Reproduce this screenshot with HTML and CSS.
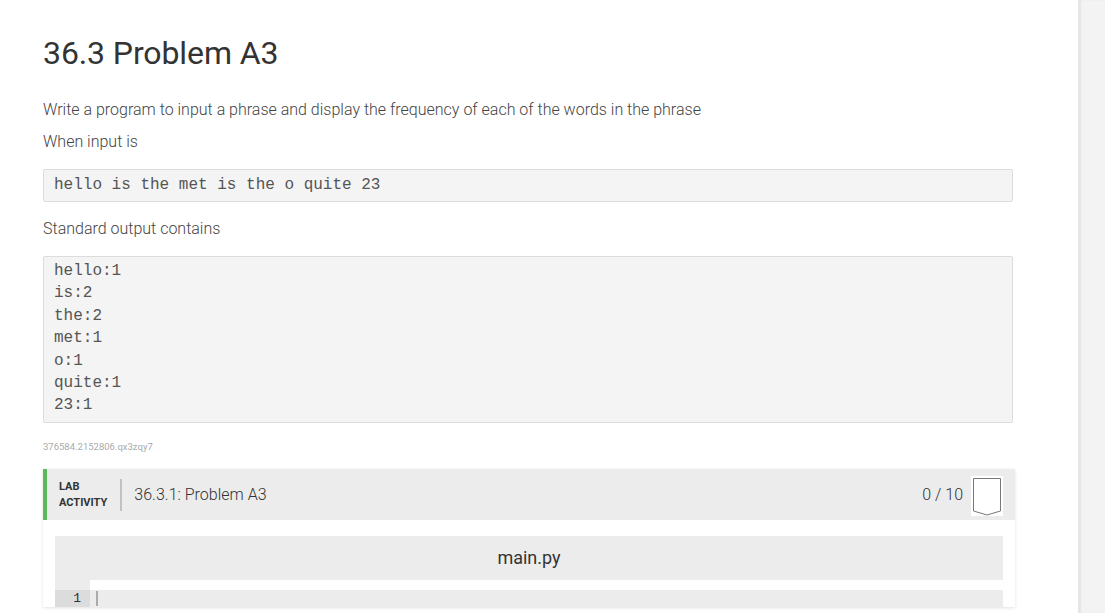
FILE: index.html
```html
<!DOCTYPE html>
<html>
<head>
<meta charset="utf-8">
<link rel="stylesheet" href="styles.css">
</head>
<body>
<div class="page">
  <main class="content">
    <h1 class="title">36.3 Problem A3</h1>
    <p class="text first">Write a program to input a phrase and display the frequency of each of the words in the phrase</p>
    <p class="text">When input is</p>
    <pre class="code single">hello is the met is the o quite 23</pre>
    <p class="text">Standard output contains</p>
    <pre class="code multi">hello:1
is:2
the:2
met:1
o:1
quite:1
23:1</pre>
    <div class="ident">376584.2152806.qx3zqy7</div>
    <section class="lab">
      <header class="lab-head">
        <div class="lab-label">LAB<br>ACTIVITY</div>
        <div class="lab-sep"></div>
        <div class="lab-title">36.3.1: Problem A3</div>
        <div class="lab-score">0 / 10</div>
        <div class="badge">
          <svg width="32" height="40" viewBox="0 0 32 40"><path d="M2.5 2.5 H29.5 V35 L16 39 L2.5 35 Z" fill="#fff" stroke="#777" stroke-width="1"/></svg>
        </div>
      </header>
      <div class="lab-body">
        <div class="editor">
          <div class="file-bar">main.py</div>
          <div class="gap-row"><div class="gutter-top"></div></div>
          <div class="line-row">
            <div class="gutter">1</div>
            <div class="cursor"></div>
          </div>
        </div>
      </div>
    </section>
  </main>
  <aside class="side"></aside>
</div>
</body>
</html>
```
FILE: styles.css
```css
* { box-sizing: border-box; }
html, body { margin: 0; padding: 0; height: 100%; overflow: hidden; background: #fff; }
body { font-family: Roboto, "Noto Sans", sans-serif; color: #333; }
.page { display: flex; height: 613px; }
.content { width: 1078px; padding: 0 65px 0 43px; flex: none; }
.side { flex: 1; background: #f3f3f3; box-shadow: inset 2px 0 2px rgba(0,0,0,0.06); border-left: 1px solid #e6e6e6; }
.title { font-weight: 400; font-size: 32px; color: #333; margin: 0; padding-top: 34px; line-height: 38px; letter-spacing: -0.1px; }
.text { font-size: 16px; font-weight: 300; color: #444; margin: 0; line-height: 22px; }
.text.first { margin-top: 27px; }
.text + .text { margin-top: 10px; }
.code { font-family: "Liberation Mono", "Courier New", monospace; font-size: 16px; color: #555; background: #f4f4f4; border: 1px solid #dcdcdc; border-radius: 2px; margin: 0; }
.single { margin-top: 16px; padding: 6px 10px; line-height: 19px; height: 33px; }
.code.single + .text { margin-top: 16px; }
.multi { margin-top: 16px; padding: 3px 10px 5px; line-height: 22.4px; height: 167px; }
.ident { font-size: 9.5px; color: #aaa; margin-top: 18px; line-height: 12px; }
.lab { margin-top: 16px; margin-right: -2px; box-shadow: 0 1px 3px rgba(0,0,0,0.12); }
.lab-head { display: flex; align-items: center; background: #ececec; border-left: 4px solid #5cb85c; height: 51px; padding-left: 12px; padding-right: 10px; }
.lab-label { font-size: 11px; font-weight: 700; line-height: 16px; color: #333; }
.lab-sep { width: 2px; height: 32px; background: #c2c2c2; margin: 0 12px 0 13px; }
.lab-title { font-size: 16px; font-weight: 300; color: #333; flex: 1; }
.lab-score { font-size: 16px; font-weight: 300; color: #333; margin-right: 8px; }
.badge { width: 32px; height: 40px; background: #fff; margin-top: 2px; margin-right: 2px; }
.badge svg { display: block; }
.lab-body { background: #fff; padding: 16px 12px 0 12px; }
.editor { background: #fff; }
.file-bar { background: #ececec; height: 44px; line-height: 44px; text-align: center; font-size: 18px; color: #333; font-weight: 400; }
.gap-row { height: 10px; display: flex; }
.gutter-top { width: 35px; background: #ececec; }
.line-row { display: flex; height: 17px; background: #ececec; }
.gutter { width: 35px; background: #dcdcdc; font-family: "Liberation Mono", monospace; font-size: 13px; text-align: right; padding-right: 9px; line-height: 17px; color: #333; }
.cursor { width: 2px; height: 15px; background: #aaa; margin: 1px 0 0 6px; }
```
